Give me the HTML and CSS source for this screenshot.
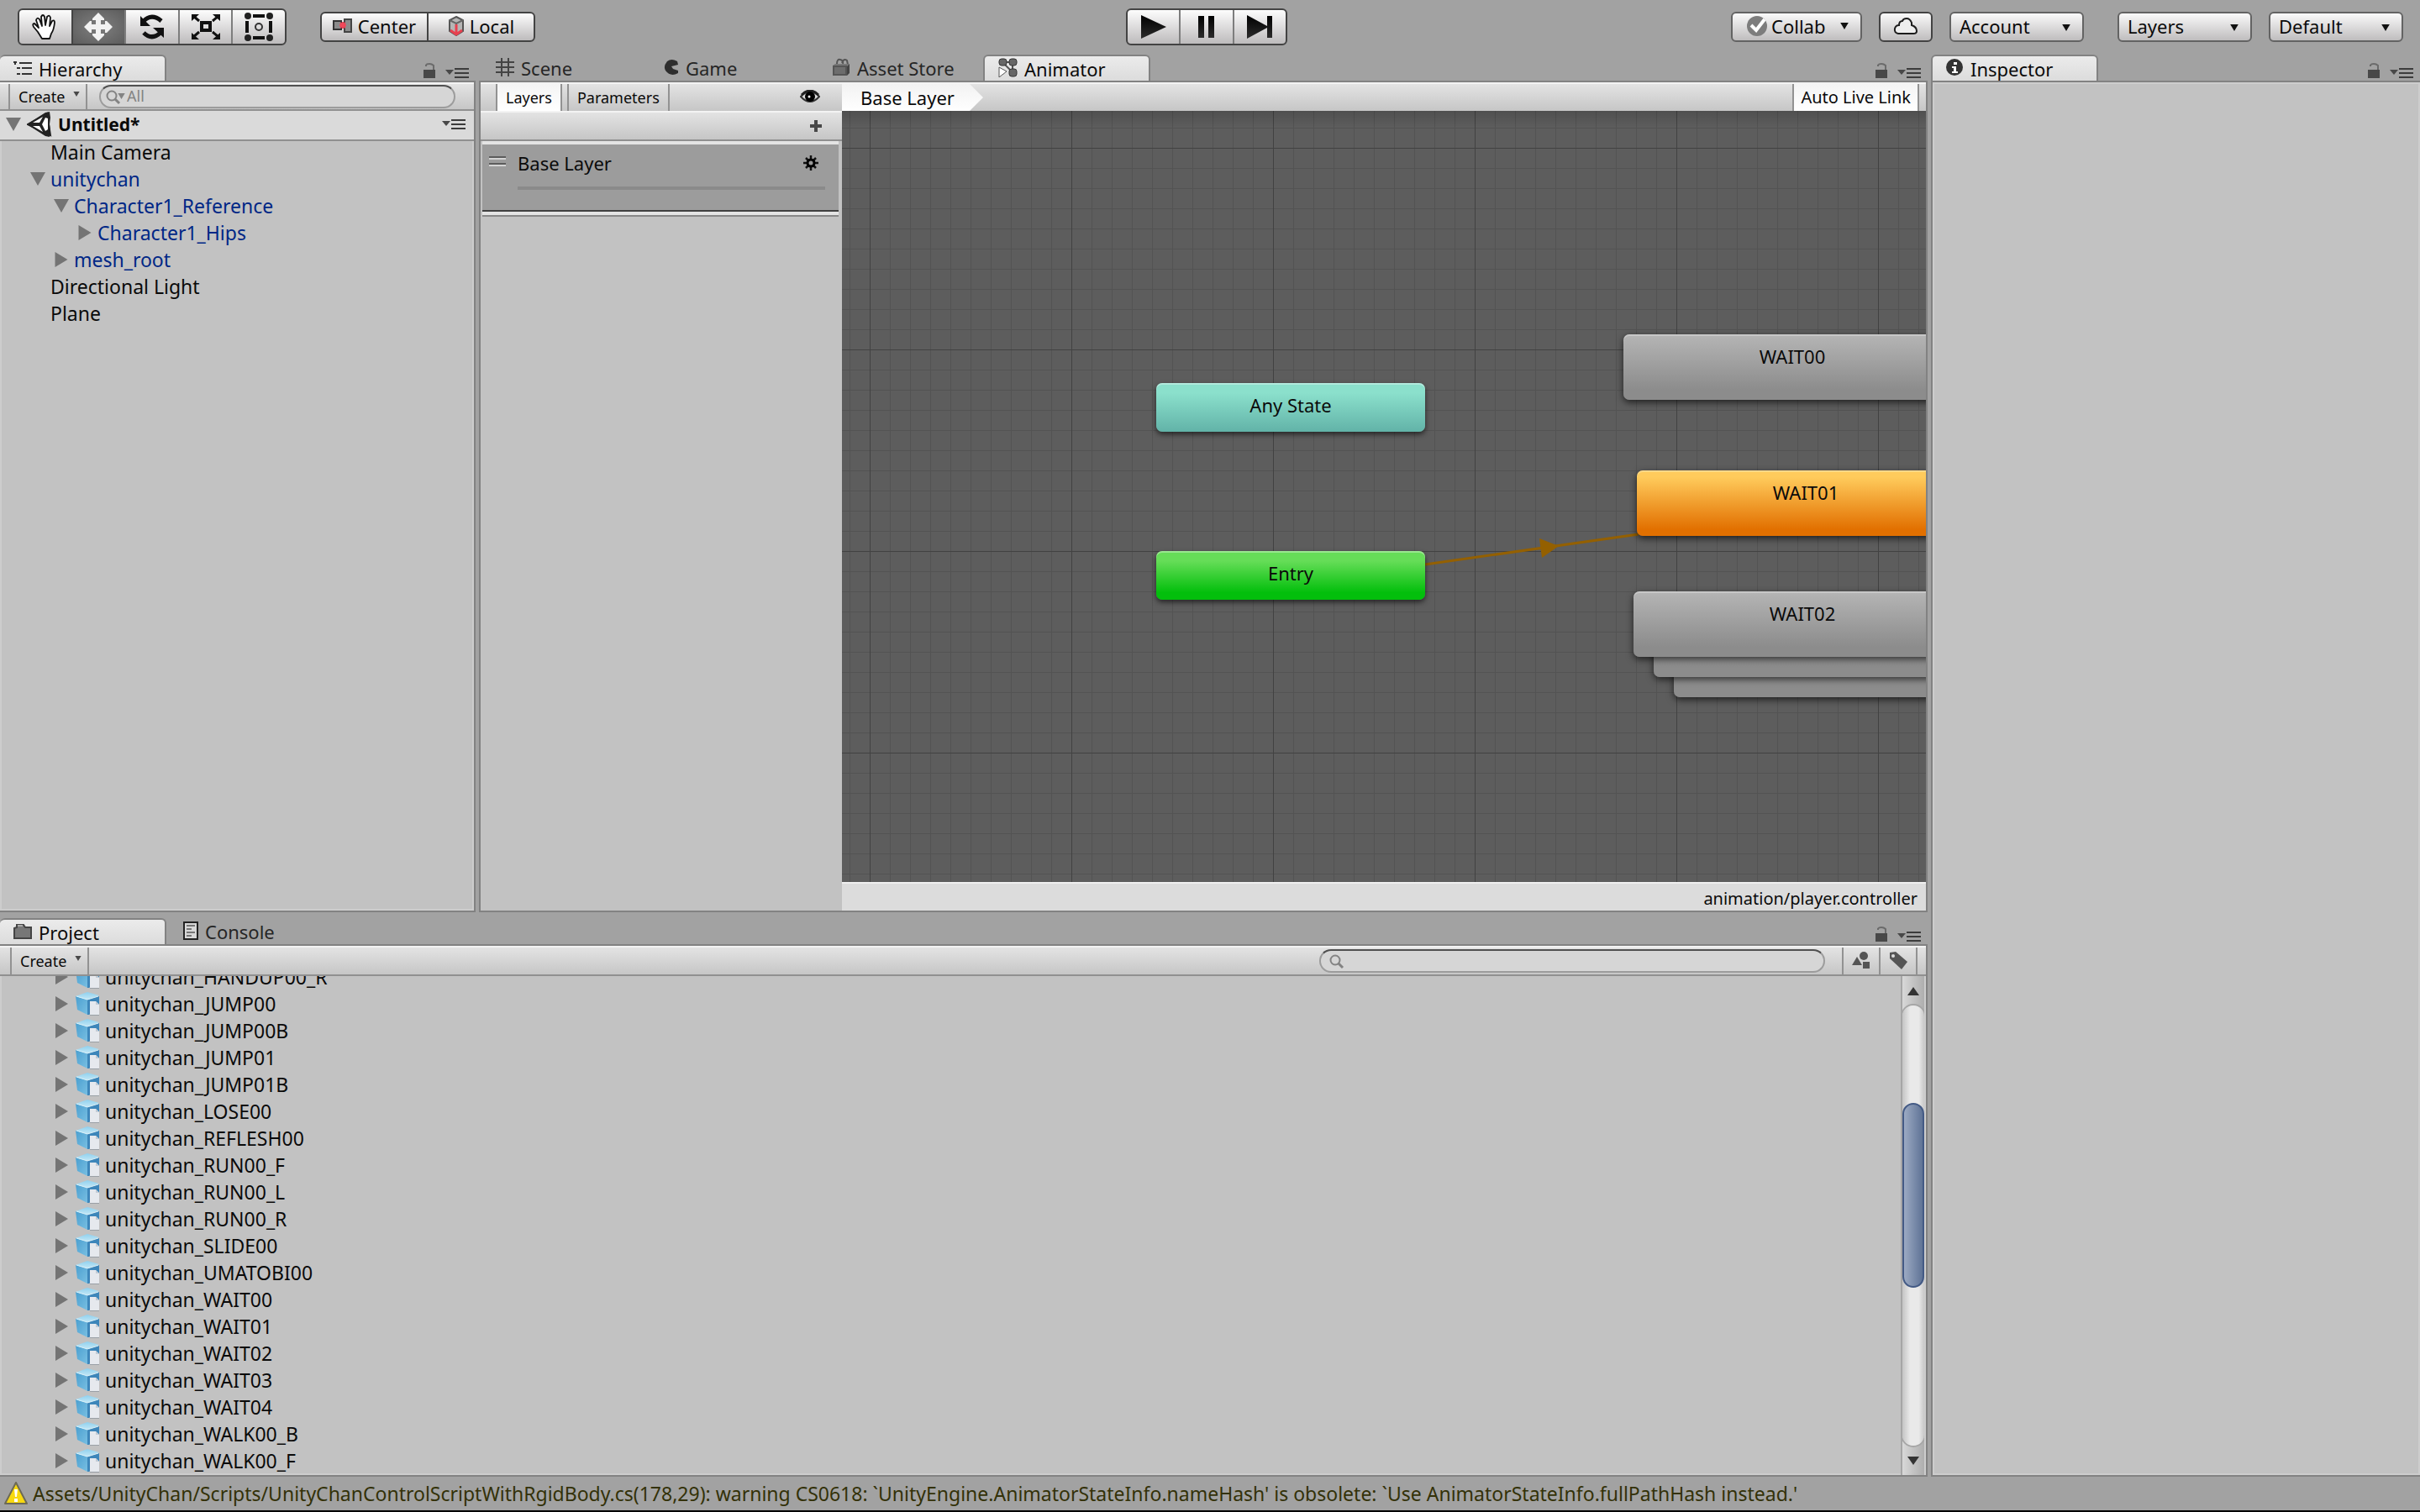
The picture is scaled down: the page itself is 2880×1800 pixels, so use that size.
FILE: index.html
```html
<!DOCTYPE html>
<html lang="en">
<head>
<meta charset="utf-8">
<title>Untitled - Editor</title>
<link rel="stylesheet" href="styles.css">
</head>
<body>
<svg class="defs" aria-hidden="true">
  <defs>
    <linearGradient id="g-top" x1="0" y1="0" x2="0" y2="1"><stop offset="0" stop-color="#8fd0ee"/><stop offset="1" stop-color="#c4e8f6"/></linearGradient>
    <linearGradient id="g-left" x1="0" y1="0" x2="1" y2="1"><stop offset="0" stop-color="#4a9fd0"/><stop offset="1" stop-color="#79bfe2"/></linearGradient>
    <linearGradient id="g-ink" x1="0" y1="0" x2="0" y2="1"><stop offset="0" stop-color="#000"/><stop offset="1" stop-color="#2c2c2c"/></linearGradient>
  </defs>
  <symbol id="i-lock" viewBox="0 0 14 18"><path d="M3 4V2.500Q4 1 7 1T12 3v6" fill="none" stroke="#6b6b6b" stroke-width="2"/><rect y="8" width="14" height="10" fill="#484848"/></symbol>
  <symbol id="i-menu" viewBox="0 0 28 12"><path d="M0 2h10L5 8z" fill="#484848"/><path d="M11 1h17M11 6h17M11 11h17" stroke="#3c3c3c" stroke-width="2"/></symbol>
  <symbol id="i-down" viewBox="0 0 12 10"><path d="M0 0h12L6 10z"/></symbol>
  <symbol id="i-right" viewBox="0 0 15 18"><path d="M0 0l15 9L0 18z" fill="#747474"/></symbol>
  <symbol id="i-open" viewBox="0 0 18 16"><path d="M0 0h18L9 16z" fill="#747474"/></symbol>
  <symbol id="i-mesh" viewBox="0 0 28 28">
    <path d="M0 5L14 9v18L2 21z" fill="url(#g-left)"/><path d="M14 9l14-4v14l-12 8h-2z" fill="#3d86ba"/>
    <path d="M0 5L14 0l14 4-14 5z" fill="url(#g-top)"/><path d="M1 5l13 4 13-4" fill="none" stroke="#d8f1fa" stroke-width="1"/>
    <path d="M17 11h7l4 4v12H17z" fill="#e6e9ee"/><path d="M24 11v4h4z" fill="#c4cbd4"/><path d="M17 27.500h11" stroke="#9aa0a6"/>
  </symbol>
  <symbol id="i-search" viewBox="0 0 18 18"><circle cx="7" cy="7" r="5.500" fill="none" stroke="#838383" stroke-width="2"/><path d="M11 11l5 5" stroke="#838383" stroke-width="3"/></symbol>
</svg>

<header class="toolbar">
  <div class="tools" role="group" aria-label="Transform tools">
    <button class="tool" aria-label="Hand"><svg width="34" height="34" viewBox="0 0 34 34"><path d="M8 23L3 17q-2-4 1-4l5 5-3-9q1-4 4-1l3 8-1-11q2-4 4 0l1 10 2-10q3-3 4 1l-1 10 3-6q3-2 3 2-1 9-4 13l-2 6H13z" fill="#fff" stroke="#111" stroke-width="1.800" stroke-linejoin="round"/></svg></button>
    <button class="tool on" aria-label="Move"><svg width="36" height="36" viewBox="0 0 36 36"><path d="M18 1l7 7v2h-4v5h5v-4h2l7 7-7 7h-2v-4h-5v5h4v2l-7 7-7-7v-2h4v-5h-5v4H8l-7-7 7-7h2v4h5v-5h-4V8z" fill="#f2f2f2"/></svg></button>
    <button class="tool" aria-label="Rotate"><svg width="30" height="30" viewBox="0 0 30 30"><path d="M4 9Q14-2 26 8M26 21Q15 32 5 22" fill="none" stroke="#111" stroke-width="5"/><path d="M1 2v12h12zM29 28V16H16z" fill="#111"/></svg></button>
    <button class="tool" aria-label="Scale"><svg width="36" height="32" viewBox="0 0 36 32"><rect x="13" y="11" width="10" height="9" fill="none" stroke="#111" stroke-width="4"/><path d="M3 3l7 6M33 3l-7 6M3 28l7-6M33 28l-7-6" stroke="#111" stroke-width="3"/><path d="M1 1h9L1 9zM35 1h-9l9 8zM1 31h9l-9-8zM35 31h-9l9-8z" fill="#111"/></svg></button>
    <button class="tool" aria-label="Rect"><svg width="36" height="34" viewBox="0 0 36 34"><g fill="none" stroke="#111" stroke-width="4"><path d="M11 4h14M11 30h14M4 10v14M32 10v14"/><circle cx="18" cy="17" r="4" stroke="#333" stroke-width="2"/></g><g fill="#222"><circle cx="5" cy="4" r="4"/><circle cx="31" cy="4" r="4"/><circle cx="5" cy="30" r="4"/><circle cx="31" cy="30" r="4"/></g></svg></button>
  </div>
  <div class="pivot" role="group" aria-label="Pivot">
    <button class="half"><svg width="24" height="18" viewBox="0 0 24 18"><rect x="1" y="3" width="9" height="10" fill="#8b8b8b" stroke="#333" stroke-width="2"/><rect x="14" y="1" width="8" height="15" fill="#8b8b8b" stroke="#444" stroke-width="2"/><path d="M12 4v8M8 8h8M9 5l6 6M15 5l-6 6" stroke="#f0485a" stroke-width="2"/></svg>Center</button>
    <button class="half"><svg width="20" height="24" viewBox="0 0 20 24"><path d="M10 1l8 4v13l-8 5-8-5V5z" fill="#b5b5b5" stroke="#555" stroke-width="2"/><path d="M2 5l8 4 8-4M10 9v4" fill="none" stroke="#666" stroke-width="2"/><path d="M10 10v11M3 17l7 5 7-5" fill="none" stroke="#e8404f" stroke-width="3"/></svg>Local</button>
  </div>
  <div class="spring"></div>
  <div class="play" role="group" aria-label="Playback">
    <button aria-label="Play"><svg width="30" height="28" viewBox="0 0 30 28"><path d="M0 0l30 14L0 28z" fill="url(#g-ink)"/></svg></button>
    <button aria-label="Pause"><svg width="20" height="26" viewBox="0 0 20 26"><path d="M0 0h7v26H0zM12 0h7v26h-7z" fill="url(#g-ink)"/></svg></button>
    <button aria-label="Step"><svg width="30" height="28" viewBox="0 0 30 28"><path d="M0 0l24 13V1h6v26h-6V15L0 28z" fill="url(#g-ink)"/></svg></button>
  </div>
  <div class="account">
    <button class="pop collab"><svg width="26" height="26" viewBox="0 0 26 26"><circle cx="13" cy="13" r="12" fill="#7d7d7d"/><path d="M6 12l6 6L22 5" fill="none" stroke="#fff" stroke-width="4"/></svg>Collab<svg class="arr" width="10" height="8"><use href="#i-down"/></svg></button>
    <button class="pop cloud" aria-label="Services"><svg width="30" height="22" viewBox="0 0 30 22"><path d="M6 20q-5-1-4-6 1-4 5-4 0-5 4-5 1-3 5-3t6 5v3q6 2 6 7 0 3-4 3z" fill="#eee" stroke="#1c1c1c" stroke-width="2"/></svg></button>
    <label class="drop"><select aria-label="Account"><option>Account</option></select><svg class="arr" width="10" height="8"><use href="#i-down"/></svg></label>
    <label class="drop gap"><select aria-label="Layers"><option>Layers</option></select><svg class="arr" width="10" height="8"><use href="#i-down"/></svg></label>
    <label class="drop"><select aria-label="Layout"><option>Default</option></select><svg class="arr" width="10" height="8"><use href="#i-down"/></svg></label>
  </div>
</header>

<main class="workspace">
  <div class="left">
    <div class="upper">
      <section class="dock hierarchy">
        <div class="tabs">
          <button class="tab on"><svg width="22" height="18" viewBox="0 0 22 18"><path d="M0 2h4M7 3h15M4 9h4M10 9h12M4 16h4M10 16h12M2 2v3" stroke="#333" stroke-width="2"/></svg>Hierarchy</button>
          <span class="tabctl"><svg width="14" height="18"><use href="#i-lock"/></svg><svg width="28" height="12"><use href="#i-menu"/></svg></span>
        </div>
        <div class="panel">
          <div class="bar">
            <button class="create">Create<svg width="10" height="6"><use href="#i-down"/></svg></button>
            <label class="search wide"><svg width="18" height="18"><use href="#i-search"/></svg><svg class="sarr" width="9" height="7"><use href="#i-down"/></svg><input type="text" placeholder="All" aria-label="Search hierarchy"></label>
          </div>
          <div class="scene"><svg width="18" height="16"><use href="#i-open"/></svg><svg width="30" height="30" viewBox="0 0 30 30"><path d="M1 15L24 2l4 26z" fill="#fff" stroke="#222" stroke-width="2"/><path d="M0 15L22 1l5-1 1 7-1 8 1 8-1 7-5-1z" fill="#222"/><path d="M7 13L19 6l-4 7zM7 17h8l4 7zM22 7l3 1v13l-3 2-4-8z" fill="#fff"/></svg><b>Untitled*</b><svg class="end" width="28" height="12"><use href="#i-menu"/></svg></div>
          <ul class="tree">
            <li class="d0">Main Camera</li>
            <li class="d0 prefab"><svg class="fold" width="18" height="16"><use href="#i-open"/></svg>unitychan</li>
            <li class="d1 prefab"><svg class="fold" width="18" height="16"><use href="#i-open"/></svg>Character1_Reference</li>
            <li class="d2 prefab"><svg class="fold" width="15" height="18"><use href="#i-right"/></svg>Character1_Hips</li>
            <li class="d1 prefab"><svg class="fold" width="15" height="18"><use href="#i-right"/></svg>mesh_root</li>
            <li class="d0">Directional Light</li>
            <li class="d0">Plane</li>
          </ul>
        </div>
      </section>

      <section class="dock animator">
        <div class="tabs">
          <button class="tab"><svg width="22" height="22" viewBox="0 0 22 22"><path d="M7 0v22M15 0v22M0 5h22M0 11h22M0 17h22" stroke="#444" stroke-width="2"/></svg>Scene</button>
          <button class="tab"><svg width="18" height="20" viewBox="0 0 18 20"><path d="M16 3Q9-1 4 3-1 9 2 14q6 8 15 3v-3l-6-2-2-3 8-2z" fill="#2e2e2e"/></svg>Game</button>
          <button class="tab"><svg width="22" height="22" viewBox="0 0 22 22"><path d="M6 7q0-6 4-5t3 5M12 6q2-6 6-3l1 5" fill="none" stroke="#555" stroke-width="2"/><path d="M1 9l3-2h17l-3 3z" fill="#777"/><path d="M1 9h17v12H1z" fill="#555"/><path d="M18 10l3-3v11l-3 3z" fill="#444"/><path d="M3 11h13v8H3z" fill="#6d6d6d"/></svg>Asset Store</button>
          <button class="tab on"><svg width="23" height="23" viewBox="0 0 23 23"><path d="M5 5l13 13M10 5h6M17 5v10" stroke="#555" stroke-width="2"/><g fill="#666" stroke="#333"><rect x="1" y="1" width="9" height="8" rx="3"/><rect x="13" y="1" width="9" height="8" rx="3"/><rect x="13" y="13" width="9" height="9" rx="3"/></g><path d="M1 11l9 5-9 7z" fill="#fff" stroke="#555"/></svg>Animator</button>
          <span class="tabctl"><svg width="14" height="18"><use href="#i-lock"/></svg><svg width="28" height="12"><use href="#i-menu"/></svg></span>
        </div>
        <div class="panel split">
          <div class="layers">
            <div class="bar sub">
              <button class="seg on">Layers</button><button class="seg">Parameters</button>
              <button class="plain" aria-label="Toggle pane"><svg width="24" height="18" viewBox="0 0 24 18"><path d="M1 8Q12-4 23 8 12 20 1 8z" fill="#ddd" stroke="#333" stroke-width="2"/><path d="M2 6Q12-4 22 6" fill="none" stroke="#222" stroke-width="3"/><circle cx="12" cy="8" r="6" fill="#000"/><circle cx="11" cy="8" r="1.500" fill="#fff"/></svg></button>
            </div>
            <div class="bar add"><button class="plain" aria-label="Add layer"><svg width="14" height="14" viewBox="0 0 14 14"><path d="M7 0v14M0 7h14" stroke="#484848" stroke-width="4"/></svg></button></div>
            <div class="layer">
              <svg class="grip" width="20" height="12" viewBox="0 0 20 12"><path d="M0 1h20M0 9h20" stroke="#5c5c5c" stroke-width="2"/><path d="M0 3h20M0 11h20" stroke="#d4d4d4" stroke-width="2"/></svg>
              <span class="lname">Base Layer</span>
              <button class="plain" aria-label="Layer settings"><svg width="18" height="18" viewBox="0 0 18 18"><path d="M9 0v18M0 9h18M3 3l12 12M15 3L3 15" stroke="#111" stroke-width="2.500"/><circle cx="9" cy="9" r="4" fill="#999" stroke="#000" stroke-width="3"/></svg></button>
              <span class="weight"></span>
            </div>
            <div class="underlay"></div>
          </div>
          <div class="stage">
            <div class="bar crumbs">
              <button class="crumb">Base Layer</button>
              <button class="seg on live">Auto Live Link</button>
            </div>
            <div class="graph">
              <svg class="wires" width="100%" height="100%"><path d="M694 540L948 504" stroke="#946000" stroke-width="3"/><path d="M830 509l23 9-20 14z" fill="#946000"/></svg>
              <div class="node any">Any State</div>
              <div class="node entry">Entry</div>
              <div class="node state wait00">WAIT00</div>
              <div class="node state wait01">WAIT01</div>
              <div class="node state stack2"></div>
              <div class="node state stack1"></div>
              <div class="node state wait02">WAIT02</div>
            </div>
            <div class="path">animation/player.controller</div>
          </div>
        </div>
      </section>
    </div>

    <section class="dock project">
      <div class="tabs tall">
        <button class="tab on"><svg width="22" height="18" viewBox="0 0 22 18"><path d="M1 17V5l3-1V1h8l2 3h7v13z" fill="#777" stroke="#444" stroke-width="2"/><path d="M5 2h6" stroke="#aaa" stroke-width="2"/></svg>Project</button>
        <button class="tab"><svg width="18" height="22" viewBox="0 0 18 22"><rect x="1" y="1" width="16" height="20" fill="#d8d8d8" stroke="#222" stroke-width="2"/><path d="M4 5h10M4 9h6M4 13h10M4 17h6" stroke="#777" stroke-width="2"/></svg>Console</button>
        <span class="tabctl"><svg width="14" height="18"><use href="#i-lock"/></svg><svg width="28" height="12"><use href="#i-menu"/></svg></span>
      </div>
      <div class="panel">
        <div class="bar top">
          <button class="create">Create<svg width="10" height="6"><use href="#i-down"/></svg></button>
          <div class="spring"></div>
          <label class="search"><svg width="18" height="18"><use href="#i-search"/></svg><input type="text" aria-label="Search project"></label>
          <button class="filter" aria-label="Filter by type"><svg width="22" height="22" viewBox="0 0 22 22"><circle cx="14" cy="5" r="5" fill="#555"/><path d="M6 6l6 10H0z" fill="#555"/><rect x="13" y="12" width="8" height="8" fill="#555"/></svg></button>
          <button class="filter last" aria-label="Filter by label"><svg width="22" height="22" viewBox="0 0 22 22"><path d="M1 1l7-1 14 12-7 9L1 8z" fill="#555"/><circle cx="5" cy="5" r="2" fill="#ddd"/></svg></button>
        </div>
        <div class="browser">
          <ul class="files">
            <li>unitychan_HANDUP00_R</li><li>unitychan_JUMP00</li><li>unitychan_JUMP00B</li><li>unitychan_JUMP01</li><li>unitychan_JUMP01B</li><li>unitychan_LOSE00</li><li>unitychan_REFLESH00</li><li>unitychan_RUN00_F</li><li>unitychan_RUN00_L</li><li>unitychan_RUN00_R</li><li>unitychan_SLIDE00</li><li>unitychan_UMATOBI00</li><li>unitychan_WAIT00</li><li>unitychan_WAIT01</li><li>unitychan_WAIT02</li><li>unitychan_WAIT03</li><li>unitychan_WAIT04</li><li>unitychan_WALK00_B</li><li>unitychan_WALK00_F</li>
          </ul>
          <div class="scroll">
            <button aria-label="Scroll up"><svg width="14" height="10"><path d="M7 0l7 10H0z" fill="#333"/></svg></button>
            <div class="track"><div class="thumb"></div></div>
            <button aria-label="Scroll down"><svg width="14" height="10"><path d="M0 0h14L7 10z" fill="#333"/></svg></button>
          </div>
        </div>
      </div>
    </section>
  </div>

  <section class="dock inspector">
    <div class="tabs">
      <button class="tab on"><svg width="21" height="21" viewBox="0 0 21 21"><circle cx="10" cy="10" r="10" fill="#333"/><path d="M9 4h4v3H9zM7 9h5v6h2v2H7v-2h2v-4H7z" fill="#fff"/></svg>Inspector</button>
      <span class="tabctl"><svg width="14" height="18"><use href="#i-lock"/></svg><svg width="28" height="12"><use href="#i-menu"/></svg></span>
    </div>
    <div class="panel"></div>
  </section>
</main>

<footer class="status"><svg width="28" height="28" viewBox="0 0 28 28"><path d="M14 1l13 25H1z" fill="#f8d90f" stroke="#6d6a55" stroke-width="2" stroke-linejoin="round"/><path d="M12 9h4l-1 9h-2zM12 20h4v4h-4z" fill="#fff"/></svg><span>Assets/UnityChan/Scripts/UnityChanControlScriptWithRgidBody.cs(178,29): warning CS0618: `UnityEngine.AnimatorStateInfo.nameHash' is obsolete: `Use AnimatorStateInfo.fullPathHash instead.'</span></footer>
<script src="files.js"></script>
</body>
</html>
```
FILE: files.js
```js
// Gives every row of the asset list its foldout arrow and model icon.
document.querySelectorAll(".files li").forEach(function (row) {
  row.insertAdjacentHTML("afterbegin",
    '<svg width="15" height="18"><use href="#i-right"/></svg>' +
    '<svg class="mesh" width="28" height="28"><use href="#i-mesh"/></svg>');
});
```
FILE: styles.css
```css
* { box-sizing: border-box; }
body {
  margin: 0;
  height: 100vh;
  display: flex;
  flex-direction: column;
  background: #a2a2a2;
  color: #0a0a0a;
  font: 22px/32px "Noto Sans", "Open Sans", sans-serif;
  border-bottom: 2px solid #000;
}
.defs { position: absolute; width: 0; height: 0; }
svg { flex: none; display: block; }
button, select, input { font: inherit; color: inherit; margin: 0; padding: 0; border: 0; background: none; white-space: nowrap; }
ul { list-style: none; margin: 0; padding: 0; }
.spring { flex: 1; }

/* main toolbar */
.toolbar { height: 64px; flex: none; display: flex; align-items: center; padding: 0 20px 0 21px; position: relative; }
.tools, .pivot, .play { display: flex; border: 2px solid #434343; border-radius: 6px; background: linear-gradient(#fdfdfd, #bdbbbc); overflow: hidden; }
.tools { width: 320px; height: 44px; }
.tool { flex: 1; display: flex; align-items: center; justify-content: center; border-left: 2px solid #7d7d7d; }
.tool:first-child { border-left: 0; }
.tool.on { background: radial-gradient(#808080, #5c5c5c); border-color: #444; }
.pivot { margin-left: 40px; width: 256px; height: 36px; }
.half { flex: 1; height: 32px; display: flex; align-items: center; justify-content: center; gap: 6px; padding-bottom: 3px; }
.half + .half { border-left: 2px solid #434343; }
.play { position: absolute; left: 50%; margin-left: -100px; width: 192px; height: 44px; }
.play button { flex: 1; display: flex; align-items: center; justify-content: center; }
.play button + button { border-left: 2px solid #7d7d7d; }
.account { display: flex; gap: 20px; }
.pop, .drop { height: 36px; display: flex; align-items: center; padding-bottom: 2px; border: 2px solid #636363; border-radius: 6px; background: linear-gradient(#fafafa, #bfbdbe); }
.collab { width: 156px; padding: 0 14px 2px 16px; gap: 4px; }
.arr { margin-left: auto; fill: #111; }
.cloud { width: 64px; justify-content: center; border-color: #434343; }
.drop { width: 160px; position: relative; }
.drop.gap { margin-left: 20px; }
.drop select { appearance: none; width: 100%; height: 30px; padding-left: 10px; line-height: 30px; }
.drop .arr { position: absolute; right: 14px; top: 13px; }

/* docks and tabs */
.workspace { flex: 1; min-height: 0; display: flex; gap: 4px; }
.left { flex: 1; min-width: 0; display: flex; flex-direction: column; }
.upper { flex: 1022 1 0; min-height: 0; display: flex; gap: 4px; }
.project { flex: 672 1 0; min-height: 0; }
.dock { display: flex; flex-direction: column; min-width: 0; }
.hierarchy { width: 566px; }
.animator { flex: 1; }
.inspector { width: 582px; }
.tabs { height: 34px; flex: none; display: flex; align-items: flex-end; border-bottom: 2px solid #828282; padding-right: 8px; }
.tabs.tall { height: 40px; }
.tab { width: 200px; height: 31px; display: flex; align-items: center; gap: 8px; padding: 0 0 0 20px; color: #262626; }
.tab svg { margin-top: -2px; }
.tab.on { width: 198px; padding-left: 16px; color: #0a0a0a; background: linear-gradient(#ebebeb, #dcdcdc); border: 2px solid #828282; border-width: 2px 2px 0 0; border-radius: 6px 6px 0 0; }
.animator .tab.on, .inspector .tab.on { width: 199px; border-left-width: 2px; }
.tabctl { margin-left: auto; display: flex; align-items: flex-end; gap: 12px; padding-bottom: 3px; }
.panel { flex: 1; min-height: 0; display: flex; flex-direction: column; background: #c2c2c2; border: 2px solid #828282; border-top: 0; box-shadow: inset -2px -2px #cdcdcd, inset 2px 2px #cdcdcd; }
.hierarchy .panel, .project .panel { border-left: 0; }
.inspector .panel { border-right: 0; }

/* strips under the tabs */
.bar { height: 34px; flex: none; display: flex; align-items: center; background: linear-gradient(#e3e3e3, #c6c6c6); border-top: 2px solid #f3f3f3; border-bottom: 2px solid #909090; font-size: 18px; }
.bar.top { height: 36px; padding: 0 10px 0 2px; }
.create { width: 94px; height: 100%; margin-left: 10px; display: flex; align-items: center; gap: 9px; padding: 0 0 0 10px; border: 2px solid #929292; border-width: 0 2px; }
.create svg { fill: #484848; margin-top: -6px; }
.search { height: 28px; width: 602px; display: flex; align-items: center; gap: 2px; padding: 0 10px; border: 2px solid #9c9c9c; border-top: 2px solid #505050; border-radius: 14px; background: #d6d6d6; }
.search.wide { flex: 1; margin: 0 22px 0 14px; padding-left: 6px; }
.search svg { margin-top: 2px; }
.search .sarr { fill: #838383; margin-left: -6px; margin-top: -2px; }
.search input { flex: 1; min-width: 0; height: 24px; padding-bottom: 3px; outline: 0; line-height: 20px; }
.search input::placeholder { color: #838383; opacity: 1; }
.filter { width: 44px; height: 100%; display: flex; align-items: center; justify-content: center; border-left: 2px solid #929292; }
.search + .filter { margin-left: 20px; }
.filter.last { width: 46px; border-right: 2px solid #929292; }

/* hierarchy */
.scene { height: 34px; flex: none; display: flex; align-items: center; gap: 7px; padding: 0 10px 2px 7px; background: #dadada; box-shadow: 0 2px #909090; font-size: 21px; }
.scene .end { margin-left: auto; }
.tree { font-size: 23px; }
.tree li { height: 32px; display: flex; align-items: center; gap: 6px; padding-bottom: 3px; }
.fold { width: 18px; margin-left: -24px; }
.d0 { padding-left: 60px; }
.d1 { padding-left: 88px; }
.d2 { padding-left: 116px; }
.prefab { color: #002786; }

/* animator */
.panel.split { flex-direction: row; box-shadow: none; }
.layers { width: 430px; flex: none; }
.seg { height: 100%; padding: 0 10px; border: 2px solid #929292; border-width: 0 2px; }
.seg.on { background: linear-gradient(#f4f4f4, #fff); }
.seg + .seg { margin-left: 6px; }
.sub { padding: 0 26px 0 18px; border-bottom-width: 0; }
.plain { margin-left: auto; }
.add { height: 36px; padding-right: 24px; }
.layer { margin: 0 4px 0 2px; height: 84px; display: grid; grid-template-columns: 20px 1fr auto; column-gap: 14px; align-items: center; align-content: start; padding: 6px 16px 0 8px; background: #9c9c9c; border-top: 4px solid #e4e4e4; border-bottom: 2px solid #404040; }
.grip { margin-top: -4px; }
.layer .plain { margin-right: 8px; }
.weight { grid-column: 2 / 4; height: 4px; margin-top: 12px; background: #8a8a8a; }
.underlay { height: 6px; margin: 0 4px 0 2px; background: #e4e4e4; border-bottom: 2px solid #888; }
.stage { flex: 1; min-width: 0; display: flex; flex-direction: column; }
.crumbs { border-bottom: 0; padding-right: 8px; font-size: 22px; }
.crumb { height: 100%; width: 168px; padding: 0 0 2px 22px; text-align: left; background: linear-gradient(#f2f2f2, #fff); clip-path: polygon(0 0, 152px 0, 100% 50%, 152px 100%, 0 100%); }
.live { margin-left: auto; padding: 0 8px; font-size: 20px; }
.graph {
  flex: 1; position: relative; overflow: hidden; background-color: #5d5d5d;
  background-image: linear-gradient(#00000026, #0000 20px),
    linear-gradient(90deg, #424242 1px, #0000 1px), linear-gradient(#424242 1px, #0000 1px),
    linear-gradient(90deg, #535353 1px, #0000 1px), linear-gradient(#535353 1px, #0000 1px);
  background-size: auto, 240px 240px, 240px 240px, 24px 24px, 24px 24px;
  background-position: 0 0, 33px 44px, 33px 44px, 9px 20px, 9px 20px;
}
.wires { position: absolute; inset: 0; }
.node { position: absolute; width: 320px; height: 58px; padding-top: 10px; text-align: center; border-radius: 7px; box-shadow: 0 3px 6px #0009, inset 0 2px #fff5; }
.state { width: 402px; height: 78px; background: linear-gradient(#b5b5b5, #8c8c8c 85%); box-shadow: 0 3px 8px #000a, inset 0 2px #fff4; }
.any { left: 374px; top: 324px; background: linear-gradient(#8be0cc 20%, #62b3a8); }
.entry { left: 374px; top: 524px; background: linear-gradient(#66dd58 20%, #03bf0c 85%); }
.wait00 { left: 930px; top: 266px; }
.wait01 { left: 946px; top: 428px; background: linear-gradient(#ffcb5c 10%, #e27000 90%); }
.wait02 { left: 942px; top: 572px; }
.stack1 { left: 966px; top: 596px; }
.stack2 { left: 990px; top: 620px; }
.path { height: 34px; flex: none; border-top: 2px solid #f0f0f0; background: #dcdcdc; text-align: right; padding: 5px 10px 0 0; font-size: 20px; line-height: 26px; }

/* project */
.browser { flex: 1; min-height: 0; display: flex; overflow: hidden; }
.files { flex: 1; margin-top: -14px; font-size: 23px; }
.files li { height: 32px; display: flex; align-items: center; gap: 7px; padding: 0 0 3px 66px; }
.files .mesh { margin-left: 2px; }
.scroll { width: 28px; margin-right: 2px; display: flex; flex-direction: column; border-left: 2px solid #a6a6a6; background: linear-gradient(90deg, #d8d8d8, #aeaeae); }
.scroll button { height: 35px; display: flex; align-items: center; justify-content: center; flex: none; }
.track { flex: 1; border-radius: 13px; background: linear-gradient(90deg, #c4c4c4, #e9e9e9 35%, #e9e9e9 75%, #c8c8c8); box-shadow: 0 0 0 2px #a6a6a6; clip-path: inset(-2px 0); }
.thumb { height: 42%; margin-top: 116px; border: 2px solid #435a85; border-radius: 13px; background: linear-gradient(90deg, #9caac3, #5f7396); }

.status { height: 40px; flex: none; display: flex; align-items: center; gap: 6px; padding-left: 5px; color: #333108; white-space: nowrap; font-size: 23px; }
```
